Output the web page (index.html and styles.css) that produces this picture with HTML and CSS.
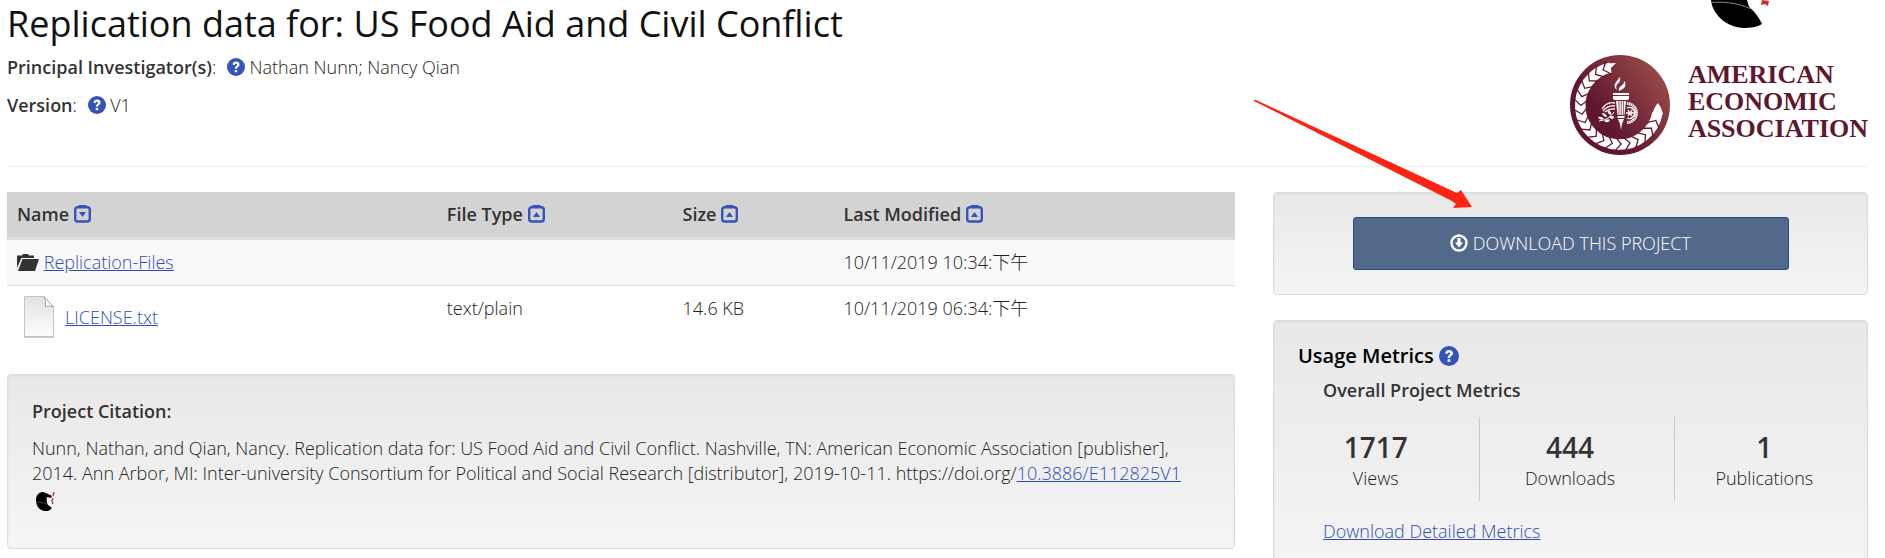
FILE: index.html
```html
<!doctype html>
<html lang="en">
  <head>
    <meta charset="utf-8">
    <meta name="viewport" content="width=device-width, initial-scale=1">
    <title>Replication data for: US Food Aid and Civil Conflict</title>
    <link rel="stylesheet" href="styles.css">
  </head>
  <body>
    <!-- shared icons -->
    <svg class="sprite" aria-hidden="true">
      <symbol id="icon-help" viewBox="0 0 20 20">
        <circle cx="10" cy="10" r="10" fill="#3553b9"/>
        <path d="M6.2 7.6C6.3 5.3 7.8 4 10.1 4c2.300 0 3.900 1.300 3.900 3.300 0 2.700-2.900 2.600-2.900 4.700H8.700c0-3 2.400-3 2.400-4.500 0-.7-.4-1.100-1.100-1.100-.8 0-1.200.5-1.300 1.400zM8.600 13.200h2.700v2.600H8.600z" fill="#fff"/>
      </symbol>
      <symbol id="icon-down" viewBox="0 0 17 18">
        <path d="M4.500 0h8v1.500h-8z" fill="#3553b9"/>
        <rect x="1.200" y="2.200" width="14.600" height="14.300" rx="2.500" fill="none" stroke="#3553b9" stroke-width="2.400"/>
        <path d="M5 7h7l-3.500 5z" fill="#3553b9"/>
      </symbol>
      <symbol id="icon-up" viewBox="0 0 17 18">
        <path d="M4.500 0h8v1.500h-8z" fill="#3553b9"/>
        <rect x="1.200" y="2.200" width="14.600" height="14.300" rx="2.500" fill="none" stroke="#3553b9" stroke-width="2.400"/>
        <path d="M5 12h7L8.500 7z" fill="#3553b9"/>
      </symbol>
    </svg>

    <div class="page">
      <header class="page-header">
        <div class="heading">
          <h1>Replication data for: US Food Aid and Civil Conflict</h1>
          <p class="meta"><strong>Principal Investigator(s)</strong>:
            <a href="#" aria-label="Help on investigators"><svg class="icon-help"><use href="#icon-help"/></svg></a>
            Nathan Nunn; Nancy Qian</p>
          <p class="meta"><strong>Version</strong>:
            <a href="#" aria-label="Help on version"><svg class="icon-help"><use href="#icon-help"/></svg></a>
            V1</p>
        </div>
        <div class="brand">
          <svg class="mascot" viewBox="0 0 80 28" aria-hidden="true">
            <path d="M11 0h36c1 3 1 5 3 8 4 3 9 9 12 16-5 3-11 4-18 4C27 28 12 14 11 0z" fill="#000"/>
            <path d="M11 2.500c12-1 25 0 39 6" fill="none" stroke="#888" stroke-width="1"/>
            <path d="M62 0l7 1-1 5-3-2-4 1z" fill="#cf2a2e"/>
          </svg>
          <a class="association" href="#">
            <svg class="seal" viewBox="0 0 100 100" aria-hidden="true">
              <defs>
                <linearGradient id="seal-fill" x1="0.300" y1="0.600" x2="0.900" y2="0.150">
                  <stop offset="0" stop-color="#5f162f"/>
                  <stop offset="1" stop-color="#994a48"/>
                </linearGradient>
                <path id="notch" d="M-7 3.500L0 -2.500L7 3.500"/>
              </defs>
              <circle cx="50" cy="50" r="50" fill="url(#seal-fill)"/>
              <path d="M40.500 12.500A39 39 0 1 0 87.500 58" fill="none" stroke="#fff" stroke-width="10.500"/>
              <path d="M38 8.500Q41 8 46 8L37 17z" fill="#fff"/>
              <path d="M82.500 59Q84 52 88 48Q92 53 93 59z" fill="#fff"/>
              <g fill="none" stroke="#64192f" stroke-width="1.300">
                <use href="#notch" transform="rotate(-112 50 50) translate(89 50)"/>
                <use href="#notch" transform="rotate(-125 50 50) translate(89 50)"/>
                <use href="#notch" transform="rotate(-138 50 50) translate(89 50)"/>
                <use href="#notch" transform="rotate(-151 50 50) translate(89 50)"/>
                <use href="#notch" transform="rotate(-164 50 50) translate(89 50)"/>
                <use href="#notch" transform="rotate(-177 50 50) translate(89 50)"/>
                <use href="#notch" transform="rotate(-190 50 50) translate(89 50)"/>
                <use href="#notch" transform="rotate(-203 50 50) translate(89 50)"/>
                <use href="#notch" transform="rotate(-216 50 50) translate(89 50)"/>
                <use href="#notch" transform="rotate(-229 50 50) translate(89 50)"/>
                <use href="#notch" transform="rotate(-242 50 50) translate(89 50)"/>
                <use href="#notch" transform="rotate(-255 50 50) translate(89 50)"/>
                <use href="#notch" transform="rotate(-268 50 50) translate(89 50)"/>
                <use href="#notch" transform="rotate(-281 50 50) translate(89 50)"/>
                <use href="#notch" transform="rotate(-294 50 50) translate(89 50)"/>
                <use href="#notch" transform="rotate(-307 50 50) translate(89 50)"/>
                <use href="#notch" transform="rotate(-320 50 50) translate(89 50)"/>
                <use href="#notch" transform="rotate(-333 50 50) translate(89 50)"/>
              </g>
              <!-- torch -->
              <g fill="#fff">
                <path d="M50 22q1 4-2 6.500t-1 6.500q-4-3-1.500-7T50 22zM54.500 26q2.500 5-1 7.500L49 36q-1-3 2-5t3.500-5z"/>
                <path d="M43 38h16v2H43zM43 41h16v3l-1.500 1h-13L43 44z"/>
                <path d="M46 46h10l-1.500 14h-7zM47.500 61h7v2h-7zM48 64h6l-2 5-1 6-1-6z"/>
              </g>
              <g fill="none" stroke="#64192f" stroke-width=".7">
                <path d="M49 46v14M51.200 46v14M53.400 46v14"/>
              </g>
              <!-- gear and branch -->
              <g fill="none" stroke="#fff">
                <path d="M57 48.500a9.500 9.500 0 1 1 0 19" stroke-width="3" stroke-dasharray="1.500 .5"/>
                <path d="M57 53a5.500 5.500 0 1 1 0 10M56 58h8M58 55l4 6M62 55l-4 6" stroke-width="1.300"/>
                <path d="M32 54q5-8 13-6M33 56q5-6 12-5M35 57q5-4 10-3" stroke-width="1.300"/>
                <path d="M29 66q10-1 15-9" stroke-width="1"/>
              </g>
              <path d="M28 62q4-1 6 2-4 2-6-2zM32 58q4 0 5 4-4 0-5-4zM38 55q4 2 3 5-4-1-3-5zM34 66q4-3 6-1-2 4-6 1zM39 62q3-2 5 0-1 4-5 0z" fill="#fff"/>
            </svg>
            <span class="association-name">AMERICAN<br>ECONOMIC<br>ASSOCIATION</span>
          </a>
        </div>
      </header>

      <div class="columns">
        <main>
          <table class="files">
            <thead>
              <tr>
                <th class="col-name">Name <a href="#" aria-label="Sort by name"><svg class="icon-sort"><use href="#icon-down"/></svg></a></th>
                <th class="col-type">File Type <a href="#" aria-label="Sort by file type"><svg class="icon-sort"><use href="#icon-up"/></svg></a></th>
                <th class="col-size">Size <a href="#" aria-label="Sort by size"><svg class="icon-sort"><use href="#icon-up"/></svg></a></th>
                <th>Last Modified <a href="#" aria-label="Sort by date"><svg class="icon-sort"><use href="#icon-up"/></svg></a></th>
              </tr>
            </thead>
            <tbody>
              <tr class="odd">
                <td><svg class="icon-folder" viewBox="0 0 22 18" aria-hidden="true"><path d="M0 15V2.500h5L6 1h5l1 1.500h5V5H4.500z" fill="#333"/><path d="M5.500 6H22l-4 12H1z" fill="#333"/></svg> <a href="#">Replication-Files</a></td>
                <td></td>
                <td></td>
                <td>10/11/2019 10:34:下午</td>
              </tr>
              <tr>
                <td>
                  <div class="file">
                    <svg class="icon-file" viewBox="0 0 32 42" aria-hidden="true">
                      <defs>
                        <linearGradient id="paper" x1="0" y1="0" x2="0" y2="1">
                          <stop offset="0" stop-color="#e2e2e2"/>
                          <stop offset="1" stop-color="#fdfdfd"/>
                        </linearGradient>
                      </defs>
                      <path d="M1 41h30" stroke="#ccc" stroke-width="2"/>
                      <path d="M1.500 .5H21L30.500 11v29.500h-29z" fill="url(#paper)" stroke="#c4c4c4"/>
                      <path d="M21 .5q2.500 4 1.500 10 5-1 8 .5z" fill="#fff" stroke="#a5a5a5"/>
                    </svg>
                    <a href="#">LICENSE.txt</a>
                  </div>
                </td>
                <td>text/plain</td>
                <td>14.6 KB</td>
                <td>10/11/2019 06:34:下午</td>
              </tr>
            </tbody>
          </table>

          <section class="well citation">
            <h2>Project Citation:</h2>
            <p>Nunn, Nathan, and Qian, Nancy. Replication data for: US Food Aid and Civil Conflict. Nashville, TN: American Economic Association [publisher], 2014. Ann Arbor, MI: Inter-university Consortium for Political and Social Research [distributor], 2019-10-11. https://doi.org/<a href="#">10.3886/E112825V1</a></p>
            <svg class="mascot-small" viewBox="0 0 20 20" aria-hidden="true">
              <path d="M1 9C1 4 4 1 8 1l3 1 6 3-1 2-4-1q-1 5 1 8l4 3q-3 4-8 3Q1 18 1 9z" fill="#000"/>
              <path d="M1 11q6 0 11 2" fill="none" stroke="#666" stroke-width=".6"/>
              <path d="M19 1l-1 4M18 7l-1 3 1 3" fill="none" stroke="#c9474a" stroke-width="1.500"/>
            </svg>
          </section>
        </main>

        <aside>
          <section class="well download">
            <button type="button" class="btn-download">
              <svg class="icon-download" viewBox="0 0 18 18" aria-hidden="true">
                <circle cx="9" cy="9" r="7.500" fill="none" stroke="#fff" stroke-width="2.400"/>
                <path d="M7.400 4h3.200v4.500H13l-4 5-4-5h2.400z" fill="#fff"/>
              </svg>
              DOWNLOAD THIS PROJECT
            </button>
          </section>

          <section class="well metrics">
            <h2>Usage Metrics <a href="#" aria-label="Help on metrics"><svg class="icon-help large"><use href="#icon-help"/></svg></a></h2>
            <div class="metrics-body">
              <h3>Overall Project Metrics</h3>
              <ul class="counts">
                <li><strong>1717</strong> Views</li>
                <li><strong>444</strong> Downloads</li>
                <li><strong>1</strong> Publications</li>
              </ul>
              <a href="#">Download Detailed Metrics</a>
            </div>
          </section>
        </aside>
      </div>

      <svg class="pointer" viewBox="0 0 222 110" aria-hidden="true">
        <path d="M0 0L2 0L203 93L207 90L218 107L199 108L202 104L198 101L0 1z" fill="#fe2413"/>
      </svg>
    </div>
  </body>
</html>
```

FILE: styles.css
```css
* {
  box-sizing: border-box;
}

body {
  margin: 0;
  background: #fff;
  color: #222;
  font-family: "Open Sans", "Noto Sans CJK SC", sans-serif;
  font-size: 18px;
  font-weight: 300;
  line-height: 25px;
}

h1, h2, h3, p, ul {
  margin: 0;
  padding: 0;
}

a {
  color: #2f4db5;
}

strong, th, h2, h3 {
  color: #333;
  font-weight: 600;
}

svg {
  vertical-align: middle;
}

.sprite {
  display: none;
}

.page {
  position: relative;
  height: 100vh;
  padding: 0 17px 0 7px;
  overflow: hidden;
}

/* header */

.page-header {
  display: flex;
  justify-content: space-between;
  height: 167px;
  border-bottom: 1px solid #eee;
}

.heading h1 {
  margin-bottom: 7px;
  color: #111;
  font-size: 36px;
  font-weight: 400;
  line-height: 48px;
}

.meta {
  margin-bottom: 13px;
}

.icon-help {
  width: 18px;
  height: 18px;
  margin: -4px 0 0 6px;
}

.brand {
  display: flex;
  flex-direction: column;
  align-items: flex-end;
}

.mascot {
  width: 80px;
  height: 28px;
  margin: 0 88px 27px 0;
}

.association {
  display: flex;
  align-items: center;
  gap: 18px;
  text-decoration: none;
}

.seal {
  width: 100px;
  height: 100px;
}

.association-name {
  padding-bottom: 8px;
  color: #5f162f;
  font-family: "Liberation Serif", serif;
  font-size: 26px;
  font-weight: 700;
  line-height: 27px;
}

/* two columns, 8 + 4 of 12 */

.columns {
  display: grid;
  grid-template-columns: repeat(12, 1fr);
  gap: 38px;
  padding-top: 25px;
}

main {
  grid-column: span 8;
}

aside {
  grid-column: span 4;
}

/* file list */

.files {
  width: 100%;
  margin-bottom: 26px;
  border-collapse: collapse;
}

.files th,
.files td {
  padding: 10px;
  text-align: left;
  vertical-align: top;
}

.files th {
  background: #d3d3d3;
  border-bottom: 3px solid #ddd;
}

.files .odd td {
  background: #f9f9f9;
  border-bottom: 1px solid #ddd;
}

.col-name {
  width: 35%;
}

.col-type {
  width: 19.2%;
}

.col-size {
  width: 13.1%;
}

.icon-sort {
  width: 17px;
  height: 18px;
  margin-top: -4px;
}

.icon-folder {
  width: 22px;
  height: 18px;
  margin-top: -4px;
}

.file {
  display: flex;
  align-items: center;
  gap: 9px;
  padding-left: 5px;
}

.icon-file {
  width: 34px;
  height: 42px;
}

/* grey boxes */

.well {
  padding: 24px;
  background: linear-gradient(#e8e8e8, #f5f5f5);
  border: 1px solid #dcdcdc;
  border-radius: 4px;
  box-shadow: inset 0 1px 3px rgba(0, 0, 0, 0.05);
}

.citation h2 {
  margin-bottom: 12px;
  font-size: 18px;
  line-height: 25px;
}

.mascot-small {
  display: block;
  width: 20px;
  height: 20px;
  margin: 5px 0 13px 3px;
}

.download {
  margin-bottom: 25px;
  text-align: center;
}

.btn-download {
  width: 80%;
  padding: 13px;
  background: #53698b;
  border: 1px solid #20507f;
  border-radius: 3px;
  color: #fff;
  font: inherit;
}

.icon-download {
  width: 18px;
  height: 18px;
  margin-top: -4px;
}

.metrics {
  padding-top: 22px;
}

.metrics h2 {
  color: #000;
  font-size: 20px;
}

.icon-help.large {
  width: 20px;
  height: 20px;
  margin-left: 0;
}

.metrics-body {
  padding: 10px 0 10px 25px;
}

.metrics h3 {
  font-size: 18px;
}

.counts {
  display: flex;
  margin: 14px -25px 18px -37px;
  list-style: none;
}

.counts li {
  flex: 1;
  padding: 11px 14px 10px 0;
  border-right: 1px solid #c8c8c8;
  text-align: center;
}

.counts li:last-child {
  border-right: 0;
}

.counts strong {
  display: block;
  font-size: 28px;
  line-height: 38px;
}

/* red arrow laid over the page */

.pointer {
  position: absolute;
  top: 100px;
  left: 1254px;
  width: 222px;
  height: 110px;
}
```
